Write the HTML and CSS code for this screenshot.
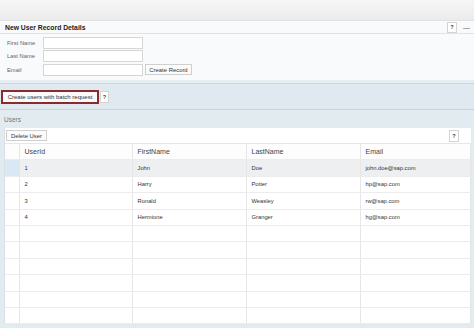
FILE: index.html
```html
<!DOCTYPE html>
<html>
<head>
<meta charset="utf-8">
<link rel="stylesheet" href="styles.css">
</head>
<body>
<div class="topbar"></div>
<div class="panel-head">
  <span class="panel-title">New User Record Details</span>
  <span class="head-tools">
    <span class="help-btn">?</span>
    <span class="minus">&#8212;</span>
  </span>
</div>
<div class="form">
  <div class="form-row"><label class="lbl">First Name</label><span class="input"></span></div>
  <div class="form-row"><label class="lbl">Last Name</label><span class="input"></span></div>
  <div class="form-row"><label class="lbl">Email</label><span class="input"></span><span class="btn">Create Record</span></div>
</div>
<div class="sep"></div>
<div class="toolbar">
  <span class="btn batch">Create users with batch request</span>
  <span class="help-btn q">?</span>
</div>
<div class="users">
  <div class="users-title">Users</div>
  <div class="table-panel">
    <div class="table-tools">
      <span class="btn del">Delete User</span>
      <span class="help-btn">?</span>
    </div>
    <table class="grid">
      <colgroup><col class="c0"><col class="c1"><col class="c2"><col class="c3"><col class="c4"></colgroup>
      <thead>
        <tr><th></th><th>UserId</th><th>FirstName</th><th>LastName</th><th>Email</th></tr>
      </thead>
      <tbody>
        <tr class="sel"><td class="s"></td><td>1</td><td>John</td><td>Doe</td><td>john.doe@sap.com</td></tr>
        <tr><td class="s"></td><td>2</td><td>Harry</td><td>Potter</td><td>hp@sap.com</td></tr>
        <tr><td class="s"></td><td>3</td><td>Ronald</td><td>Weasley</td><td>rw@sap.com</td></tr>
        <tr><td class="s"></td><td>4</td><td>Hermione</td><td>Granger</td><td>hg@sap.com</td></tr>
        <tr><td class="s"></td><td></td><td></td><td></td><td></td></tr>
        <tr><td class="s"></td><td></td><td></td><td></td><td></td></tr>
        <tr><td class="s"></td><td></td><td></td><td></td><td></td></tr>
        <tr><td class="s"></td><td></td><td></td><td></td><td></td></tr>
        <tr><td class="s"></td><td></td><td></td><td></td><td></td></tr>
        <tr><td class="s"></td><td></td><td></td><td></td><td></td></tr>
      </tbody>
    </table>
  </div>
</div>
</body>
</html>
```
FILE: styles.css
```css
html, body {
  margin: 0;
  padding: 0;
}
body {
  width: 474px;
  height: 328px;
  overflow: hidden;
  background: #e2ebf0;
  font-family: "Liberation Sans", Arial, sans-serif;
  color: #333;
}
.topbar {
  height: 20px;
  background: linear-gradient(#f6f6f6, #ececec);
  border-bottom: 1px solid #e2e2e2;
}
.panel-head {
  height: 12px;
  background: #f8fafb;
  border-bottom: 1px solid #dfe4e7;
  display: flex;
  align-items: center;
  justify-content: space-between;
  padding: 0 4px 0 5px;
}
.panel-title {
  font-weight: bold;
  font-size: 6.8px;
  color: #222;
}
.head-tools {
  display: flex;
  align-items: center;
  gap: 6px;
}
.help-btn {
  display: inline-flex;
  align-items: center;
  justify-content: center;
  width: 8px;
  height: 9px;
  border: 1px solid #d4d4d4;
  background: #fff;
  font-size: 5.5px;
  font-weight: bold;
  color: #444;
}
.minus {
  font-size: 7px;
  color: #666;
  line-height: 1;
}
.form {
  background: #f8fafb;
  padding: 3px 0 4px 0;
  height: 39px;
  display: flex;
  flex-direction: column;
  gap: 2px;
}
.form-row {
  display: flex;
  align-items: center;
  height: 11.5px;
}
.lbl {
  width: 36px;
  padding-left: 7px;
  font-size: 5.8px;
  color: #666;
}
.input {
  width: 98px;
  height: 10px;
  border: 1px solid #d6d6d6;
  background: #fff;
}
.btn {
  display: inline-flex;
  align-items: center;
  justify-content: center;
  border: 1px solid #cfcfcf;
  background: #fbfbfb;
  font-size: 5.9px;
  color: #333;
  box-sizing: border-box;
}
.form .btn {
  margin-left: 2px;
  width: 47px;
  height: 11px;
}
.sep {
  height: 3px;
  background: #e6eef2;
  border-bottom: 1px solid #cdd6db;
}
.toolbar {
  height: 25px;
  background: #dfe9ef;
  border-bottom: 1px solid #c9d3d9;
  display: flex;
  align-items: center;
  padding-left: 1px;
  gap: 1px;
}
.btn.batch {
  width: 98px;
  height: 14px;
  border: 2px solid #8c2b2b;
  background: #fafafa;
  font-size: 6px;
}
.toolbar .q {
  height: 10px;
  width: 7px;
}
.users {
  background: #e2ebf0;
  padding: 0 3px 5px 4px;
}
.users-title {
  height: 18px;
  display: flex;
  align-items: center;
  font-size: 6.5px;
  color: #777;
}
.table-panel {
  background: #fff;
  border-left: 1px solid #d9e1e6;
}
.table-tools {
  height: 15px;
  display: flex;
  align-items: center;
  justify-content: space-between;
  padding: 0 12px 0 1px;
}
.btn.del {
  width: 41px;
  height: 11px;
  font-size: 5.9px;
}
.table-tools .help-btn {
  height: 10px;
  width: 8px;
}
.grid {
  width: 100%;
  border-collapse: collapse;
  table-layout: fixed;
}
.c0 { width: 14px; }
.c1 { width: 113px; }
.c2 { width: 114px; }
.c3 { width: 114px; }
.grid th, .grid td {
  height: 15.4px;
  padding: 0 0 0 5px;
  border-right: 1px solid #e6e6e6;
  border-bottom: 1px solid #ececec;
  text-align: left;
  white-space: nowrap;
  overflow: hidden;
}
.grid th {
  font-weight: normal;
  font-size: 7px;
  color: #444;
  background: #fdfdfd;
  border-top: 1px solid #e6e6e6;
}
.grid td {
  font-size: 5.8px;
  color: #333;
}
.grid td.s, .grid th:first-child {
  padding: 0;
}
.grid tr.sel td {
  background: #eeeff1;
}
.grid tr.sel td.s {
  background: #dae8f4;
}
```
